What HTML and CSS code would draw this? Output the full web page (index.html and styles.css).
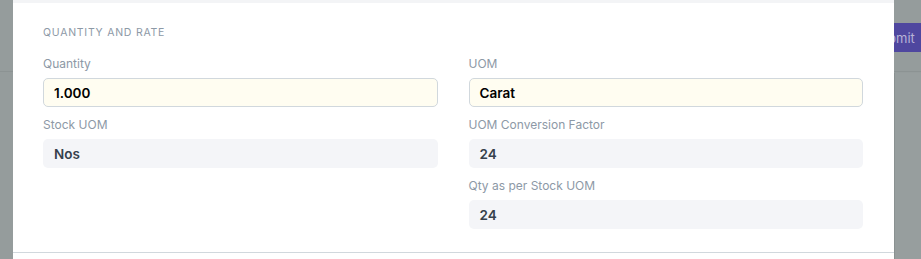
FILE: index.html
```
<!DOCTYPE html>
<html lang="en">
<head>
  <meta charset="UTF-8" />
  <title>Quantity and Rate</title>
  <link rel="stylesheet" href="styles.css">
</head>
<body>
  <div class="page">
    <!-- fundo da pagina por tras do modal -->
    <div class="backdrop left">
      <div class="page-head"></div>
    </div>

    <div class="modal">
      <div class="modal-top"></div>
      <div class="modal-body">
        <h6 class="section-head">Quantity and Rate</h6>
        <div class="grid">
          <div class="col">
            <div class="field">
              <label>Quantity</label>
              <div class="control input">1.000</div>
            </div>
            <div class="field">
              <label>Stock UOM</label>
              <div class="control static">Nos</div>
            </div>
          </div>
          <div class="col">
            <div class="field">
              <label>UOM</label>
              <div class="control input">Carat</div>
            </div>
            <div class="field">
              <label>UOM Conversion Factor</label>
              <div class="control static">24</div>
            </div>
            <div class="field">
              <label>Qty as per Stock UOM</label>
              <div class="control static">24</div>
            </div>
          </div>
        </div>
      </div>
      <div class="modal-footer"></div>
    </div>

    <div class="backdrop right">
      <div class="page-head">
        <button class="btn-submit">Submit</button>
      </div>
      <div class="page-card"></div>
    </div>
  </div>
</body>
</html>
```

FILE: styles.css
```
body {
  font-family: 'Inter', 'Noto Sans', sans-serif;
  margin: 0;
  padding: 0;
  background-color: #959c9c;
}

.page {
  display: flex;
  height: 259px;
  overflow: hidden;
}

.backdrop {
  background-color: #959c9c;
  overflow: hidden;
}

.backdrop.left {
  width: 13px;
}

.backdrop.right {
  flex: 1;
}

.page-head {
  height: 72px;
  border-bottom: 1px solid #8c9393;
  box-sizing: border-box;
  padding-top: 23px;
}

.btn-submit {
  display: block;
  margin-left: -30px;
  height: 29px;
  padding: 0 14px 0 8px;
  border: none;
  background-color: #4f479f;
  color: #b7b3d6;
  font-family: inherit;
  font-size: 13px;
  white-space: nowrap;
}

.page-card {
  height: 200px;
  margin-top: 1px;
  border-left: 1px solid #8a9191;
  background-color: #979e9e;
}

.modal {
  width: 881px;
  background: white;
  display: flex;
  flex-direction: column;
}

.modal-top {
  height: 3px;
  background-color: #f3f4f6;
}

.modal-body {
  padding: 22px 31px 13px 30px;
}

.section-head {
  margin: 0 0 15px;
  font-size: 10.5px;
  line-height: 16px;
  font-weight: 400;
  letter-spacing: 0.75px;
  text-transform: uppercase;
  color: #8d99a6;
}

.grid {
  display: grid;
  grid-template-columns: 1fr 1fr;
  column-gap: 31px;
  align-items: start;
}

.field {
  margin-bottom: 10px;
}

.field label {
  display: block;
  font-size: 12px;
  line-height: 16px;
  color: #8d99a6;
  margin-bottom: 6px;
}

.control {
  height: 29px;
  box-sizing: border-box;
  border-radius: 5px;
  padding: 0 10px;
  display: flex;
  align-items: center;
  font-size: 13.5px;
  font-weight: 600;
}

.control.input {
  background-color: #fffdf1;
  border: 1px solid #d1d8dd;
  color: #000;
}

.control.static {
  background-color: #f4f5f8;
  padding-left: 11px;
  color: #36414c;
}

.modal-footer {
  flex: 1;
  border-top: 1px solid #d1d8dd;
}
```
